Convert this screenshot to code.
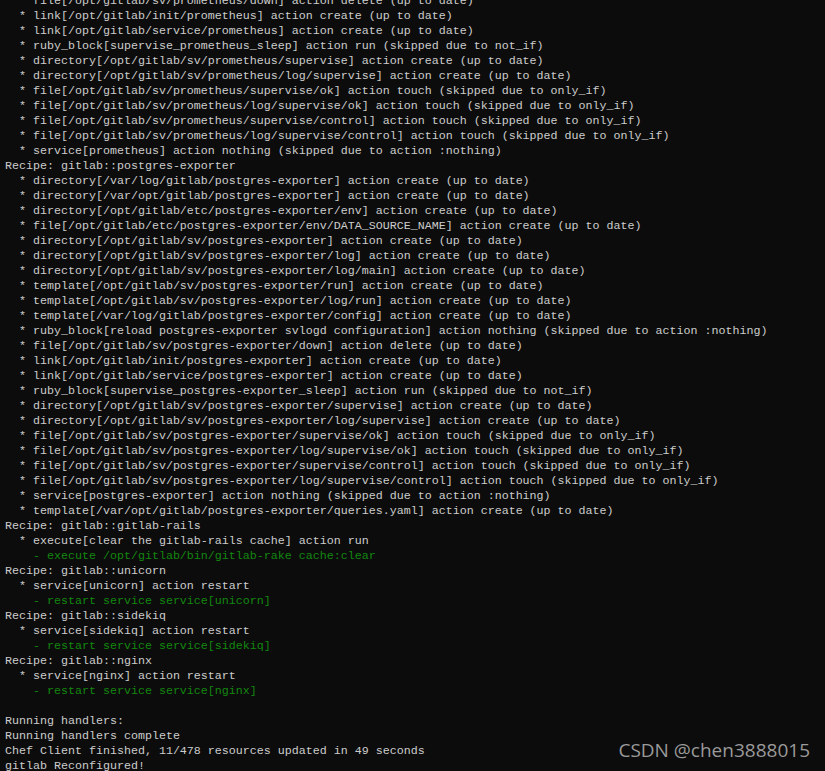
import React from 'react';

type Line = { text: string; green?: boolean };

const lines: Line[] = [
  { text: '  * file[/opt/gitlab/sv/prometheus/down] action delete (up to date)' },
  { text: '  * link[/opt/gitlab/init/prometheus] action create (up to date)' },
  { text: '  * link[/opt/gitlab/service/prometheus] action create (up to date)' },
  { text: '  * ruby_block[supervise_prometheus_sleep] action run (skipped due to not_if)' },
  { text: '  * directory[/opt/gitlab/sv/prometheus/supervise] action create (up to date)' },
  { text: '  * directory[/opt/gitlab/sv/prometheus/log/supervise] action create (up to date)' },
  { text: '  * file[/opt/gitlab/sv/prometheus/supervise/ok] action touch (skipped due to only_if)' },
  { text: '  * file[/opt/gitlab/sv/prometheus/log/supervise/ok] action touch (skipped due to only_if)' },
  { text: '  * file[/opt/gitlab/sv/prometheus/supervise/control] action touch (skipped due to only_if)' },
  { text: '  * file[/opt/gitlab/sv/prometheus/log/supervise/control] action touch (skipped due to only_if)' },
  { text: '  * service[prometheus] action nothing (skipped due to action :nothing)' },
  { text: 'Recipe: gitlab::postgres-exporter' },
  { text: '  * directory[/var/log/gitlab/postgres-exporter] action create (up to date)' },
  { text: '  * directory[/var/opt/gitlab/postgres-exporter] action create (up to date)' },
  { text: '  * directory[/opt/gitlab/etc/postgres-exporter/env] action create (up to date)' },
  { text: '  * file[/opt/gitlab/etc/postgres-exporter/env/DATA_SOURCE_NAME] action create (up to date)' },
  { text: '  * directory[/opt/gitlab/sv/postgres-exporter] action create (up to date)' },
  { text: '  * directory[/opt/gitlab/sv/postgres-exporter/log] action create (up to date)' },
  { text: '  * directory[/opt/gitlab/sv/postgres-exporter/log/main] action create (up to date)' },
  { text: '  * template[/opt/gitlab/sv/postgres-exporter/run] action create (up to date)' },
  { text: '  * template[/opt/gitlab/sv/postgres-exporter/log/run] action create (up to date)' },
  { text: '  * template[/var/log/gitlab/postgres-exporter/config] action create (up to date)' },
  { text: '  * ruby_block[reload postgres-exporter svlogd configuration] action nothing (skipped due to action :nothing)' },
  { text: '  * file[/opt/gitlab/sv/postgres-exporter/down] action delete (up to date)' },
  { text: '  * link[/opt/gitlab/init/postgres-exporter] action create (up to date)' },
  { text: '  * link[/opt/gitlab/service/postgres-exporter] action create (up to date)' },
  { text: '  * ruby_block[supervise_postgres-exporter_sleep] action run (skipped due to not_if)' },
  { text: '  * directory[/opt/gitlab/sv/postgres-exporter/supervise] action create (up to date)' },
  { text: '  * directory[/opt/gitlab/sv/postgres-exporter/log/supervise] action create (up to date)' },
  { text: '  * file[/opt/gitlab/sv/postgres-exporter/supervise/ok] action touch (skipped due to only_if)' },
  { text: '  * file[/opt/gitlab/sv/postgres-exporter/log/supervise/ok] action touch (skipped due to only_if)' },
  { text: '  * file[/opt/gitlab/sv/postgres-exporter/supervise/control] action touch (skipped due to only_if)' },
  { text: '  * file[/opt/gitlab/sv/postgres-exporter/log/supervise/control] action touch (skipped due to only_if)' },
  { text: '  * service[postgres-exporter] action nothing (skipped due to action :nothing)' },
  { text: '  * template[/var/opt/gitlab/postgres-exporter/queries.yaml] action create (up to date)' },
  { text: 'Recipe: gitlab::gitlab-rails' },
  { text: '  * execute[clear the gitlab-rails cache] action run' },
  { text: '    - execute /opt/gitlab/bin/gitlab-rake cache:clear', green: true },
  { text: 'Recipe: gitlab::unicorn' },
  { text: '  * service[unicorn] action restart' },
  { text: '    - restart service service[unicorn]', green: true },
  { text: 'Recipe: gitlab::sidekiq' },
  { text: '  * service[sidekiq] action restart' },
  { text: '    - restart service service[sidekiq]', green: true },
  { text: 'Recipe: gitlab::nginx' },
  { text: '  * service[nginx] action restart' },
  { text: '    - restart service service[nginx]', green: true },
  { text: '' },
  { text: 'Running handlers:' },
  { text: 'Running handlers complete' },
  { text: 'Chef Client finished, 11/478 resources updated in 49 seconds' },
  { text: 'gitlab Reconfigured!' },
];

const App = () => {
  return (
    <div className="relative h-[771px] w-[825px] overflow-hidden bg-[#0c0c0c]">
      {/* terminal output */}
      <div className="-mt-[6px] pl-[5px] font-['Liberation_Mono',monospace] text-[11.67px] leading-[15px] text-[#cccccc]">
        {lines.map((line, i) => (
          <div key={i} className={`h-[15px] whitespace-pre ${line.green ? 'text-[#13880f]' : ''}`}>
            {line.text}
          </div>
        ))}
      </div>

      {/* watermark */}
      <div className="absolute right-[15px] bottom-[9px] font-['Open_Sans',sans-serif] text-[19px] leading-[24px] text-[#9a9a9a]">
        CSDN @chen3888015
      </div>
    </div>
  );
};

export default App;
